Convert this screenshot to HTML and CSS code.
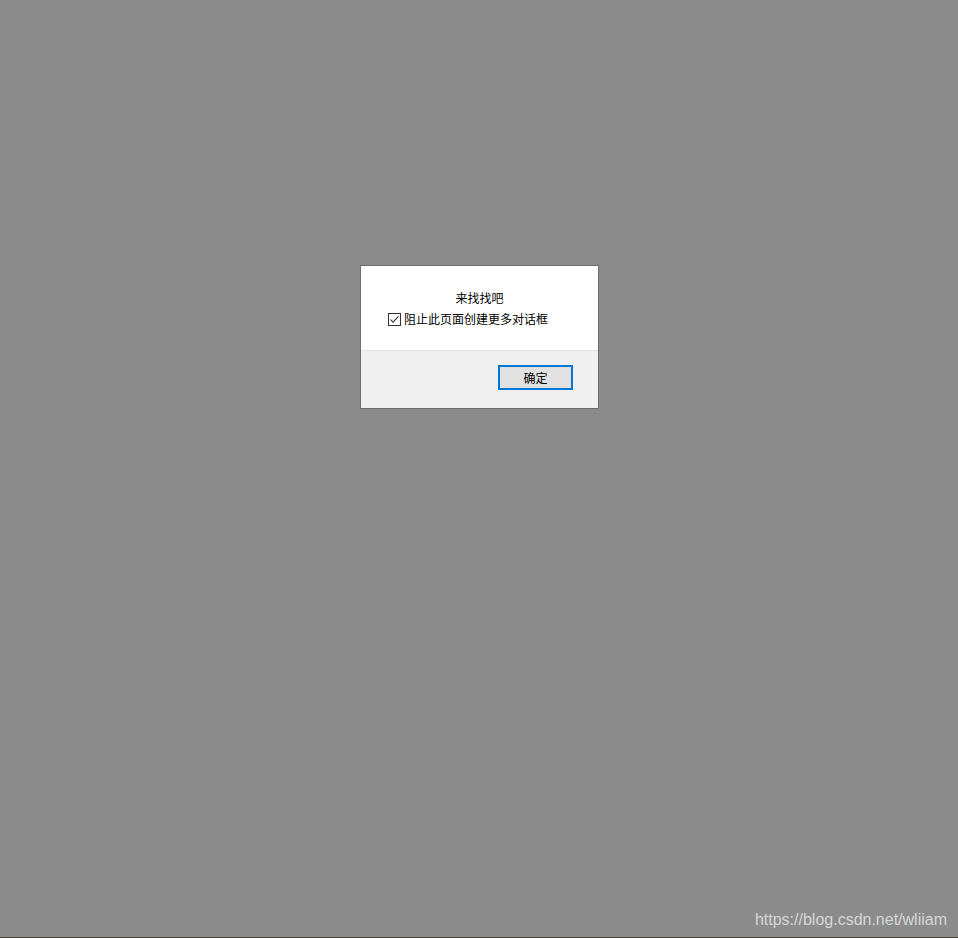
FILE: index.html
```html
<!DOCTYPE html>
<html lang="zh-CN">
<head>
<meta charset="utf-8">
<title>Dialog</title>
<link rel="stylesheet" href="styles.css">
</head>
<body>
<div class="page">
  <div class="dialog">
    <div class="dialog-body">
      <div class="message">来找找吧</div>
      <label class="suppress">
        <svg class="check" width="13" height="13" viewBox="0 0 13 13">
          <rect x="0.5" y="0.5" width="12" height="12" fill="#fff" stroke="#333" stroke-width="1"/>
          <polyline points="2.5,6.5 5,9.2 10.5,3.3" fill="none" stroke="#333" stroke-width="1.1"/>
        </svg>
        <span>阻止此页面创建更多对话框</span>
      </label>
    </div>
    <div class="dialog-footer">
      <button class="ok">确定</button>
    </div>
  </div>
  <div class="watermark">https://blog.csdn.net/wliiam</div>
</div>
</body>
</html>
```
FILE: styles.css
```css
html, body {
  margin: 0;
  padding: 0;
}
body {
  background: #8b8b8b;
  font-family: "Noto Sans CJK SC", "Microsoft YaHei", sans-serif;
}
.page {
  position: relative;
  border-bottom: 1px solid #4d4440;
  padding-top: 265px;
  box-sizing: content-box;
  height: 672px;
}
.dialog {
  width: 237px;
  margin-left: 360px;
  border: 1px solid #6e6e6e;
  background: #fff;
}
.dialog-body {
  padding: 24px 0 23px 27px;
  border-bottom: 1px solid #e3e3e3;
}
.message {
  font-size: 12px;
  line-height: 16px;
  color: #000;
  text-align: center;
  margin-left: -27px;
}
.suppress {
  display: flex;
  align-items: center;
  gap: 3px;
  margin-top: 5px;
  height: 16px;
  font-size: 12px;
  line-height: 16px;
  color: #000;
}
.check {
  display: block;
  flex: none;
}
.dialog-footer {
  background: #f0f0f0;
  height: 57px;
  display: flex;
  justify-content: flex-end;
  align-items: flex-start;
  padding: 14px 25px 0 0;
  box-sizing: border-box;
}
.ok {
  width: 75px;
  height: 25px;
  border: 2px solid #0078d7;
  background: #e1e1e1;
  font-family: "Noto Sans CJK SC", "Microsoft YaHei", sans-serif;
  font-size: 12px;
  line-height: 16px;
  color: #000;
  padding: 0;
  margin: 0;
}
.watermark {
  position: absolute;
  right: 11px;
  bottom: 8px;
  font-family: "Liberation Sans", Arial, sans-serif;
  font-size: 16px;
  color: #d6d6d6;
}
```
